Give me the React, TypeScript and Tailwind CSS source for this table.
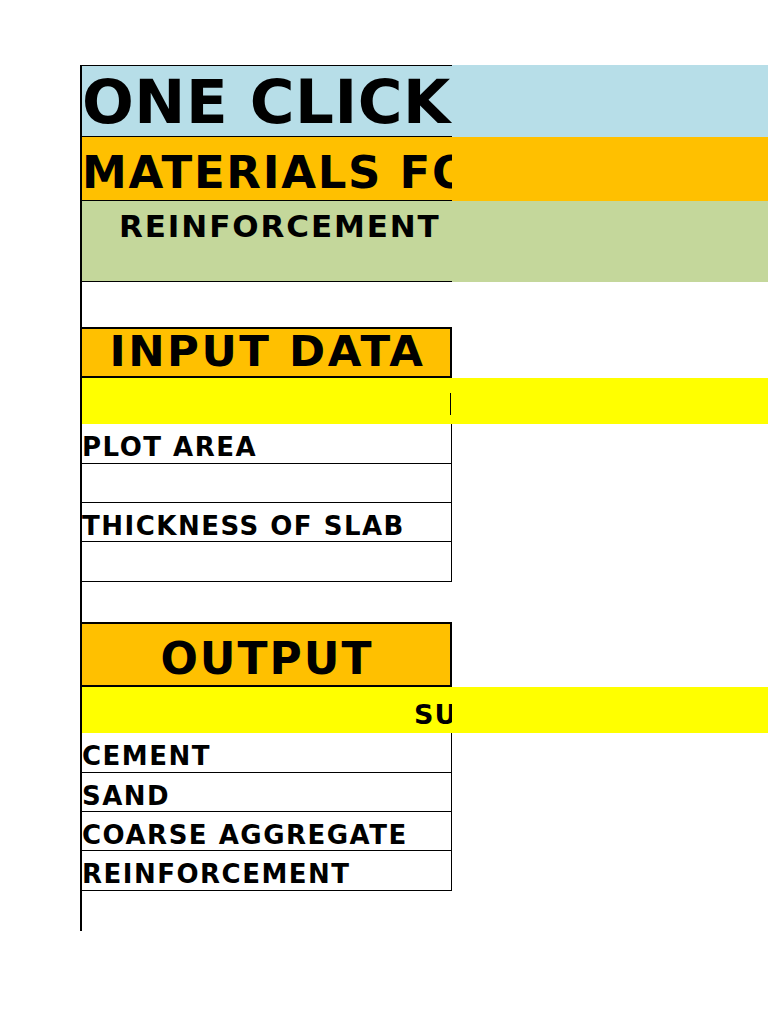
import React from "react";

const font = { fontFamily: '"DejaVu Sans", Verdana, sans-serif' };

function LabelRow({ label, h, last }: { label: string; h: string; last?: boolean }) {
  return (
    <div className={`flex ${h}`}>
      <div
        className={`w-[370px] shrink-0 border-r border-black overflow-hidden whitespace-nowrap ${
          last ? "border-b border-black" : "border-b border-[#5a5a5a]"
        }`}
      >
        <div className="text-[26px] font-bold leading-none pt-[10px] tracking-[1.5px] text-black">{label}</div>
      </div>
      <div className="flex-1" />
    </div>
  );
}

export default function App() {
  return (
    <div className="w-[768px] h-[1024px] bg-white pt-[65px] overflow-hidden" style={font}>
      <div className="ml-[80px] h-[866px] border-l-2 border-black flex flex-col">
        {/* Title rows */}
        <div className="flex h-[72px] shrink-0 bg-[#B7DEE8]">
          <div className="w-[370px] shrink-0 border-t border-b border-black overflow-hidden whitespace-nowrap">
            <div className="text-[61px] font-bold leading-none pt-[5px] tracking-[0.5px] text-black">
              ONE CLICK CALCULATOR
            </div>
          </div>
          <div className="flex-1" />
        </div>
        <div className="flex h-[64px] shrink-0 bg-[#FFC000]">
          <div className="w-[370px] shrink-0 border-b border-black overflow-hidden whitespace-nowrap">
            <div className="text-[45px] font-bold leading-none pt-[13px] tracking-[1.7px] text-black">
              MATERIALS FOR SLAB
            </div>
          </div>
          <div className="flex-1" />
        </div>
        <div className="flex h-[81px] shrink-0 bg-[#C4D79B]">
          <div className="w-[370px] shrink-0 border-b border-black overflow-hidden whitespace-nowrap">
            <div className="text-[31px] font-bold leading-none pt-[10px] pl-[37px] tracking-[1.9px] text-black">
              REINFORCEMENT
            </div>
          </div>
          <div className="flex-1" />
        </div>

        <div className="h-[45px] shrink-0" />

        {/* Input data */}
        <div className="flex h-[51px] shrink-0">
          <div className="w-[370px] shrink-0 bg-[#FFC000] border-t-2 border-b-2 border-r-2 border-black flex justify-center overflow-hidden whitespace-nowrap">
            <div className="text-[43.5px] font-bold leading-none pt-[1px] pl-[3px] tracking-[2.5px] text-black">INPUT DATA</div>
          </div>
          <div className="flex-1" />
        </div>
        <div className="flex h-[46px] shrink-0 bg-[#FFFF00]">
          <div className="w-[370px] shrink-0 flex justify-end items-start">
            <div className="w-[1px] h-[22px] mt-[15px] mr-[1px] bg-black" />
          </div>
          <div className="flex-1" />
        </div>
        <LabelRow label="PLOT AREA" h="h-[40px] shrink-0" />
        <LabelRow label="" h="h-[39px] shrink-0" />
        <LabelRow label="THICKNESS OF SLAB" h="h-[39px] shrink-0" />
        <LabelRow label="" h="h-[40px] shrink-0" last />

        <div className="h-[40px] shrink-0" />

        {/* Output */}
        <div className="flex h-[65px] shrink-0">
          <div className="w-[370px] shrink-0 bg-[#FFC000] border-t-2 border-b-2 border-r-2 border-black flex justify-center overflow-hidden whitespace-nowrap">
            <div className="text-[44px] font-bold leading-none pt-[13px] pl-[2px] tracking-[2px] text-black">OUTPUT</div>
          </div>
          <div className="flex-1" />
        </div>
        <div className="flex h-[46px] shrink-0 bg-[#FFFF00]">
          <div className="w-[370px] shrink-0 overflow-hidden whitespace-nowrap">
            <div className="text-[27px] font-bold leading-none pt-[14px] pl-[332px] tracking-[1px] text-black">
              SUMMARY
            </div>
          </div>
          <div className="flex-1" />
        </div>
        <LabelRow label="CEMENT" h="h-[40px] shrink-0" />
        <LabelRow label="SAND" h="h-[39px] shrink-0" />
        <LabelRow label="COARSE AGGREGATE" h="h-[39px] shrink-0" />
        <LabelRow label="REINFORCEMENT" h="h-[40px] shrink-0" last />
      </div>
    </div>
  );
}
